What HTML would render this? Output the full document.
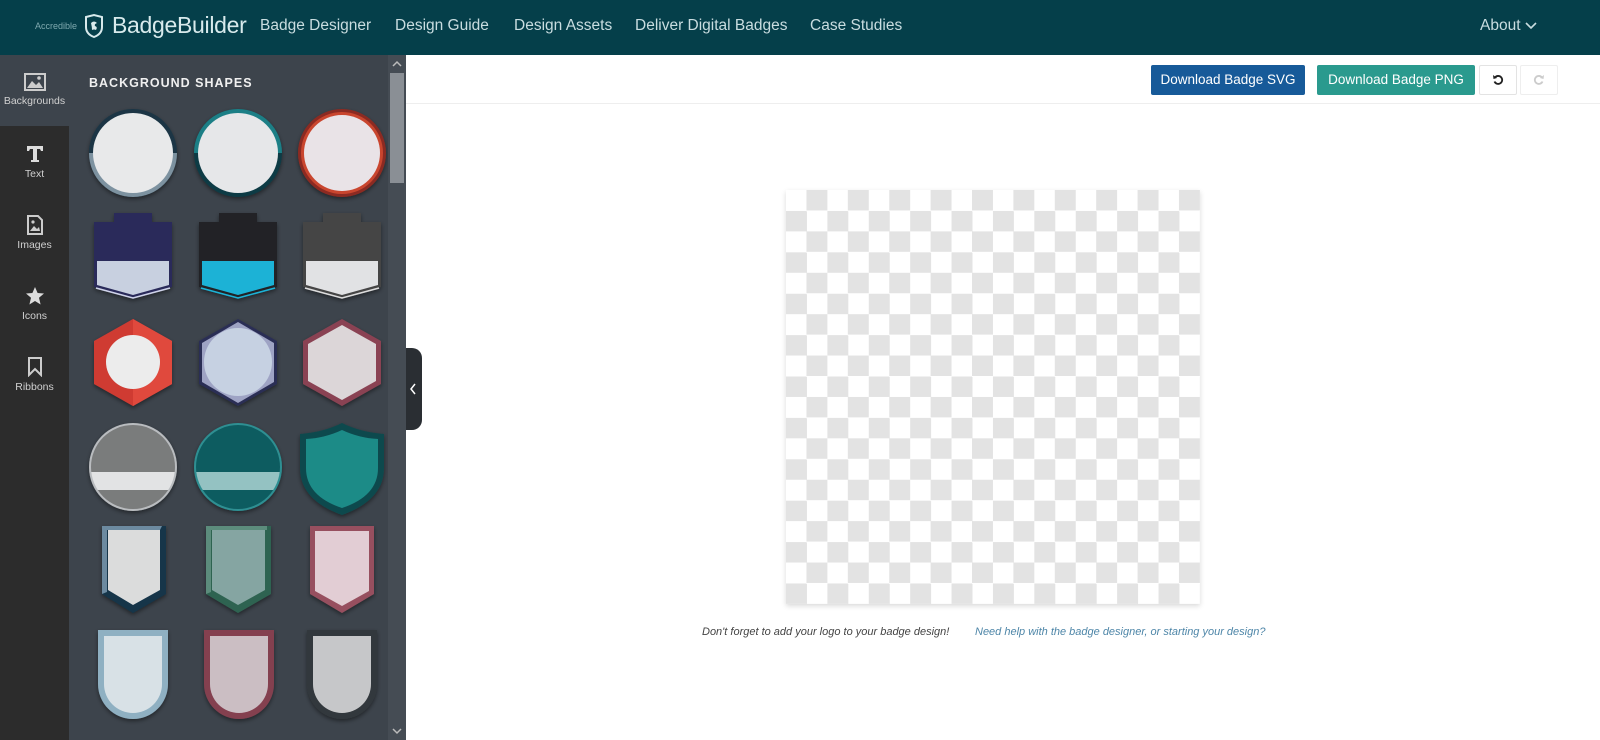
<!DOCTYPE html>
<html><head><meta charset="utf-8">
<style>
*{margin:0;padding:0;box-sizing:border-box}
body{width:1600px;height:740px;overflow:hidden;font-family:"Liberation Sans",sans-serif;background:#fff;position:relative}
.hdr{position:absolute;left:0;top:0;width:1600px;height:55px;background:#053f4a;color:#c9e0e3}
.hdr .acc{position:absolute;left:35px;top:21px;font-size:9px;color:#7fa9af}
.hdr .logo{position:absolute;left:112px;top:12px;font-size:23px;color:#d8eaec;letter-spacing:-0.3px}
.hdr .nav{position:absolute;top:17px;font-size:15.5px;color:#c9dde0}
.side{position:absolute;left:0;top:55px;width:69px;height:685px;background:#2c2c2c}
.tab{position:absolute;left:0;width:69px;height:71px;text-align:center;color:#d0d0d0;font-size:10.5px}
.tab svg{display:block;margin:0 auto 4px}
.panel{position:absolute;left:69px;top:55px;width:319px;height:685px;background:#3d444c}
.panel h3{position:absolute;left:20px;top:21px;font-size:12.5px;letter-spacing:1px;color:#f0f0f0;font-weight:bold}
.sb{position:absolute;left:388px;top:55px;width:18px;height:685px;background:#454c54}
.sb .th{position:absolute;left:2px;top:18px;width:14px;height:110px;background:#8a8f95}
.coll{position:absolute;left:406px;top:348px;width:16px;height:82px;background:#2a2e33;border-radius:0 10px 10px 0}
.tb{position:absolute;left:406px;top:55px;width:1194px;height:49px;border-bottom:1px solid #eee}
.btn{position:absolute;top:65px;height:30px;color:#fff;font-size:13.5px;line-height:30px;text-align:center;border-radius:2px}
.chk{position:absolute;left:786px;top:190px;width:414px;height:414px;
background-color:#fff;
background-image:conic-gradient(#e3e3e3 0 25%,#fff 0 50%,#e3e3e3 0 75%,#fff 0);
background-size:41.4px 41.4px;box-shadow:0 2px 5px rgba(0,0,0,.15)}
.foot{position:absolute;top:626px;font-size:11px;font-style:italic}
</style></head><body>
<div class="hdr">
 <span class="acc">Accredible</span>
 <svg style="position:absolute;left:83px;top:13px" width="22" height="26" viewBox="0 0 22 26"><path d="M3 4 L11 2 L19 4 L19 14 Q19 21 11 24 Q3 21 3 14 Z" fill="none" stroke="#d8eaec" stroke-width="2"/><path d="M8 10 q3-3 6 0 q-3 1-2 3 q3 1 1 4 q-2-1-4 0 q0-3-1-7z" fill="#d8eaec"/></svg>
 <span class="logo">BadgeBuilder</span>
 <span class="nav" style="left:260px">Badge Designer</span>
 <span class="nav" style="left:395px">Design Guide</span>
 <span class="nav" style="left:514px">Design Assets</span>
 <span class="nav" style="left:635px">Deliver Digital Badges</span>
 <span class="nav" style="left:810px">Case Studies</span>
 <span class="nav" style="left:1480px">About</span>
 <svg style="position:absolute;left:1525px;top:22px" width="12" height="8" viewBox="0 0 12 8"><path d="M1 1 L6 6 L11 1" fill="none" stroke="#c9dde0" stroke-width="1.6"/></svg>
</div>
<div class="side">
 <div class="tab" style="top:0;background:#3d444c;padding-top:18px"><svg width="22" height="18" viewBox="0 0 22 18"><rect x="1" y="1" width="20" height="16" fill="none" stroke="#ccc" stroke-width="2"/><path d="M3 15 L8 8 L12 12 L15 9 L19 15Z" fill="#ccc"/><circle cx="15" cy="5" r="1.8" fill="#ccc"/></svg>Backgrounds</div>
 <div class="tab" style="top:71px;padding-top:18px"><svg width="20" height="20" viewBox="0 0 20 20"><path d="M2 2 H18 V7 H16 L15 5 H12 V16 H14 V18 H6 V16 H8 V5 H5 L4 7 H2Z" fill="#ddd"/></svg>Text</div>
 <div class="tab" style="top:142px;padding-top:18px"><svg width="18" height="20" viewBox="0 0 18 20"><path d="M2 1 H12 L16 5 V19 H2Z" fill="none" stroke="#ccc" stroke-width="2"/><path d="M4 16 L8 11 L11 14 L13 12 L14 16Z" fill="#ccc"/><circle cx="7" cy="7" r="1.6" fill="#ccc"/></svg>Images</div>
 <div class="tab" style="top:213px;padding-top:18px"><svg width="20" height="20" viewBox="0 0 20 20"><path d="M10 1 L12.6 7 L19 7.5 L14 11.8 L15.6 18.5 L10 15 L4.4 18.5 L6 11.8 L1 7.5 L7.4 7Z" fill="#ddd"/></svg>Icons</div>
 <div class="tab" style="top:284px;padding-top:18px"><svg width="16" height="20" viewBox="0 0 16 20"><path d="M2 1 H14 V18 L8 12 L2 18Z" fill="none" stroke="#ccc" stroke-width="2"/></svg>Ribbons</div>
</div>
<div class="panel"><h3>BACKGROUND SHAPES</h3></div>
<svg style="position:absolute;left:0;top:0" width="388" height="740" viewBox="0 0 388 740">
 <defs><filter id="sh"><feDropShadow dx="0" dy="2" stdDeviation="2" flood-opacity=".45"/></filter></defs>
 <g filter="url(#sh)">
 <circle cx="133" cy="153" r="44" fill="#1a3645"/><path d="M89 153 A44 44 0 0 0 177 153Z" fill="#7d92a0"/><circle cx="133" cy="153" r="40" fill="#e8e9ea"/>
 <circle cx="238" cy="153" r="44" fill="#0e3a44"/><path d="M194 153 A44 44 0 0 1 282 153Z" fill="#1f7f86"/><circle cx="238" cy="153" r="40" fill="#e6e7e9"/>
 <circle cx="342" cy="153" r="44" fill="#8c2b20"/><circle cx="342" cy="153" r="41" fill="#c9452f"/><circle cx="342" cy="153" r="38" fill="#e9e3e7"/>
 <g><path d="M94 222 H114 V213 H152 V222 H172 V287 L133 298 L94 287Z" fill="#2a2c5a"/><path d="M97 261 H169 V285 L133 295 L97 285Z" fill="#c8d0e0"/><path d="M96 288 L133 298 L170 288" fill="none" stroke="#cfd3ea" stroke-width="1.5"/></g>
 <g><path d="M199 222 H219 V213 H257 V222 H277 V287 L238 298 L199 287Z" fill="#222425"/><path d="M202 261 H274 V285 L238 295 L202 285Z" fill="#1db2d6"/><path d="M201 288 L238 298 L275 288" fill="none" stroke="#1db2d6" stroke-width="1.5"/></g>
 <g><path d="M303 222 H323 V213 H361 V222 H381 V287 L342 298 L303 287Z" fill="#454545"/><path d="M306 261 H378 V285 L342 295 L306 285Z" fill="#e1e2e4"/><path d="M305 288 L342 298 L379 288" fill="none" stroke="#ddd" stroke-width="1.5"/></g>
 <path d="M133 319 L172 341 L172 384 L133 406 L94 384 L94 341Z" fill="#cf3a33"/><path d="M133 319 L172 341 L172 384 L133 406Z" fill="#e0483e"/><circle cx="133" cy="362" r="27" fill="#ececec"/>
 <path d="M238 319 L277 341 L277 384 L238 406 L199 384 L199 341Z" fill="#2b2e55"/><path d="M238 322 L274 343 L274 382 L238 403 L202 382 L202 343Z" fill="#9ea3c4"/><circle cx="238" cy="362" r="34" fill="#c6d1e2"/>
 <path d="M342 319 L381 341 L381 384 L342 406 L303 384 L303 341Z" fill="#8a4352"/><path d="M342 325 L376 344 L376 381 L342 400 L308 381 L308 344Z" fill="#dcd6d8"/>
 <clipPath id="c1"><circle cx="133" cy="467" r="42"/></clipPath>
 <circle cx="133" cy="467" r="44" fill="#b9bcbf"/><g clip-path="url(#c1)"><rect x="89" y="420" width="88" height="52" fill="#7a7b7c"/><rect x="89" y="472" width="88" height="18" fill="#e2e3e4"/><rect x="89" y="490" width="88" height="25" fill="#7a7b7c"/></g>
 <clipPath id="c2"><circle cx="238" cy="467" r="42"/></clipPath>
 <circle cx="238" cy="467" r="44" fill="#2f8f92"/><g clip-path="url(#c2)"><rect x="194" y="420" width="88" height="52" fill="#0f5c60"/><rect x="194" y="472" width="88" height="18" fill="#94c2c2"/><rect x="194" y="490" width="88" height="25" fill="#0f5c60"/></g>
 <path d="M342 423 Q360 432 384 434 V468 Q384 500 342 515 Q300 500 300 468 V434 Q324 432 342 423Z" fill="#0f4a4e"/><path d="M342 430 Q359 438 378 439 V468 Q378 496 342 508 Q306 496 306 468 V439 Q325 438 342 430Z" fill="#1e8b87"/>
 <path d="M102 526 H166 V594 L133 613 L102 594Z" fill="#123449"/><path d="M102 526 H162 L160 530 H107 V592 L102 594Z" fill="#6c8aa0"/><path d="M108 530 H160 V590 L133 605 L108 590Z" fill="#dbdcdc"/>
 <path d="M206 526 H271 V594 L238 613 L206 594Z" fill="#2f6451"/><path d="M206 526 H267 V530 H211 V592 L206 594Z" fill="#5c8c7c"/><path d="M212 530 H265 V590 L238 605 L212 590Z" fill="#85a5a2"/>
 <path d="M310 526 H374 V594 L342 613 L310 594Z" fill="#97505f"/><path d="M315 531 H369 V591 L342 606 L315 591Z" fill="#e2cdd4"/>
 <path d="M98 630 H168 V684 A35 35 0 0 1 98 684Z" fill="#8fb0c2"/><path d="M104 636 H162 V684 A29 29 0 0 1 104 684Z" fill="#d8e1e6"/>
 <path d="M204 630 H274 V684 A35 35 0 0 1 204 684Z" fill="#843f50"/><path d="M210 636 H268 V684 A29 29 0 0 1 210 684Z" fill="#cbbec3"/>
 <path d="M307 630 H377 V684 A35 35 0 0 1 307 684Z" fill="#33383c"/><path d="M313 636 H371 V684 A29 29 0 0 1 313 684Z" fill="#c6c7c9"/>
 </g>
</svg>
<div class="sb"><svg style="position:absolute;left:4px;top:5px" width="10" height="7"><path d="M1 6 L5 2 L9 6" fill="none" stroke="#bbb" stroke-width="1.5"/></svg><div class="th"></div><svg style="position:absolute;left:4px;top:673px" width="10" height="7"><path d="M1 1 L5 5 L9 1" fill="none" stroke="#bbb" stroke-width="1.5"/></svg></div>
<div class="coll"><svg style="position:absolute;left:3px;top:35px" width="8" height="12"><path d="M6 1 L2 6 L6 11" fill="none" stroke="#fff" stroke-width="1.5"/></svg></div>
<div class="tb"></div>
<div class="btn" style="left:1151px;width:154px;background:#175a99">Download Badge SVG</div>
<div class="btn" style="left:1317px;width:158px;background:#2a9a8e">Download Badge PNG</div>
<div class="btn" style="left:1479px;width:38px;border:1px solid #e3e3e3;background:#fff"><svg style="margin-top:8px" width="12" height="12" viewBox="0 0 12 12"><path d="M3 3.5 A4 4 0 1 1 2.5 7.5" fill="none" stroke="#222" stroke-width="1.8"/><path d="M1 1 L1.5 5 L5 4Z" fill="#222"/></svg></div>
<div class="btn" style="left:1520px;width:38px;border:1px solid #eee;background:#fff"><svg style="margin-top:8px" width="12" height="12" viewBox="0 0 12 12"><path d="M9 3.5 A4 4 0 1 0 9.5 7.5" fill="none" stroke="#ccc" stroke-width="1.8"/><path d="M11 1 L10.5 5 L7 4Z" fill="#ccc"/></svg></div>
<div class="chk"></div>
<span class="foot" style="left:702px;color:#444">Don't forget to add your logo to your badge design!</span>
<span class="foot" style="left:975px;color:#4e86a8">Need help with the badge designer, or starting your design?</span>
</body></html>
